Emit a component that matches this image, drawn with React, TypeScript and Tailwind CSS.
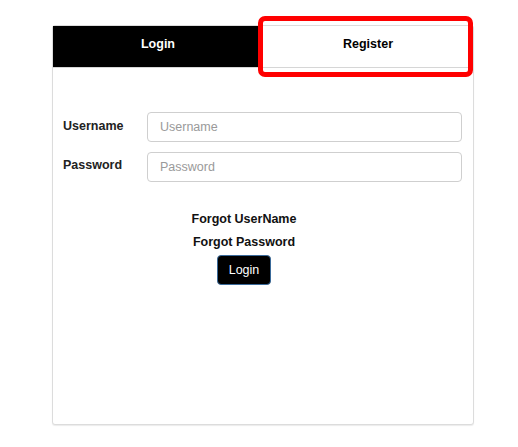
import React, { useState } from 'react';

const font = { fontFamily: '"Liberation Sans", Arial, sans-serif' };

const App = () => {
  const [tab, setTab] = useState<'login' | 'register'>('login');

  return (
    <div className="min-h-screen bg-white pl-[52px] pt-[25px]" style={font}>
      <div className="relative w-[422px] h-[400px] border border-[#dcdcdc] rounded-[3px] shadow-[0_1px_1px_rgba(0,0,0,0.08)] bg-white">
        {/* Tabs */}
        <div className="grid grid-cols-2 h-[42px] border-b border-[#d6d6d6]">
          <button
            onClick={() => setTab('login')}
            className="flex items-center justify-center pb-[4px] bg-black text-white font-bold text-[12.5px]"
          >
            Login
          </button>
          <button
            onClick={() => setTab('register')}
            className="flex items-center justify-center pb-[4px] bg-white text-black font-bold text-[12.5px]"
          >
            Register
          </button>
        </div>

        {/* highlight around Register */}
        <div className="absolute left-[205px] top-[-10px] w-[215px] h-[61px] border-[5px] border-[#ff0000] rounded-[7px] pointer-events-none" />

        {/* Form */}
        <div className="pt-[44px] pl-[10px] pr-[11px] flex flex-col gap-[10px]">
          <div className="flex items-center">
            <label className="w-[84px] pb-[2px] font-bold text-[12.5px] text-[#222]">Username</label>
            <input
              placeholder="Username"
              className="flex-1 h-[30px] px-[12px] border border-[#cfcfcf] rounded-[4px] text-[12.5px] text-[#333] placeholder:text-[#9a9a9a] outline-none"
            />
          </div>
          <div className="flex items-center">
            <label className="w-[84px] pb-[4px] font-bold text-[12.5px] text-[#222]">Password</label>
            <input
              type="password"
              placeholder="Password"
              className="flex-1 h-[30px] px-[12px] border border-[#cfcfcf] rounded-[4px] text-[12.5px] text-[#333] placeholder:text-[#9a9a9a] outline-none"
            />
          </div>
        </div>

        <div className="w-[382px] mt-[26px] flex flex-col items-center">
          <a className="font-bold text-[12.5px] leading-[23px] text-[#111] cursor-pointer">Forgot UserName</a>
          <a className="font-bold text-[12.5px] leading-[23px] text-[#111] cursor-pointer">Forgot Password</a>
          <button className="mt-[1px] w-[54px] h-[30px] bg-black text-white text-[12.5px] rounded-[4px] border border-[#3a6a9a]">
            Login
          </button>
        </div>
      </div>
    </div>
  );
};

export default App;
